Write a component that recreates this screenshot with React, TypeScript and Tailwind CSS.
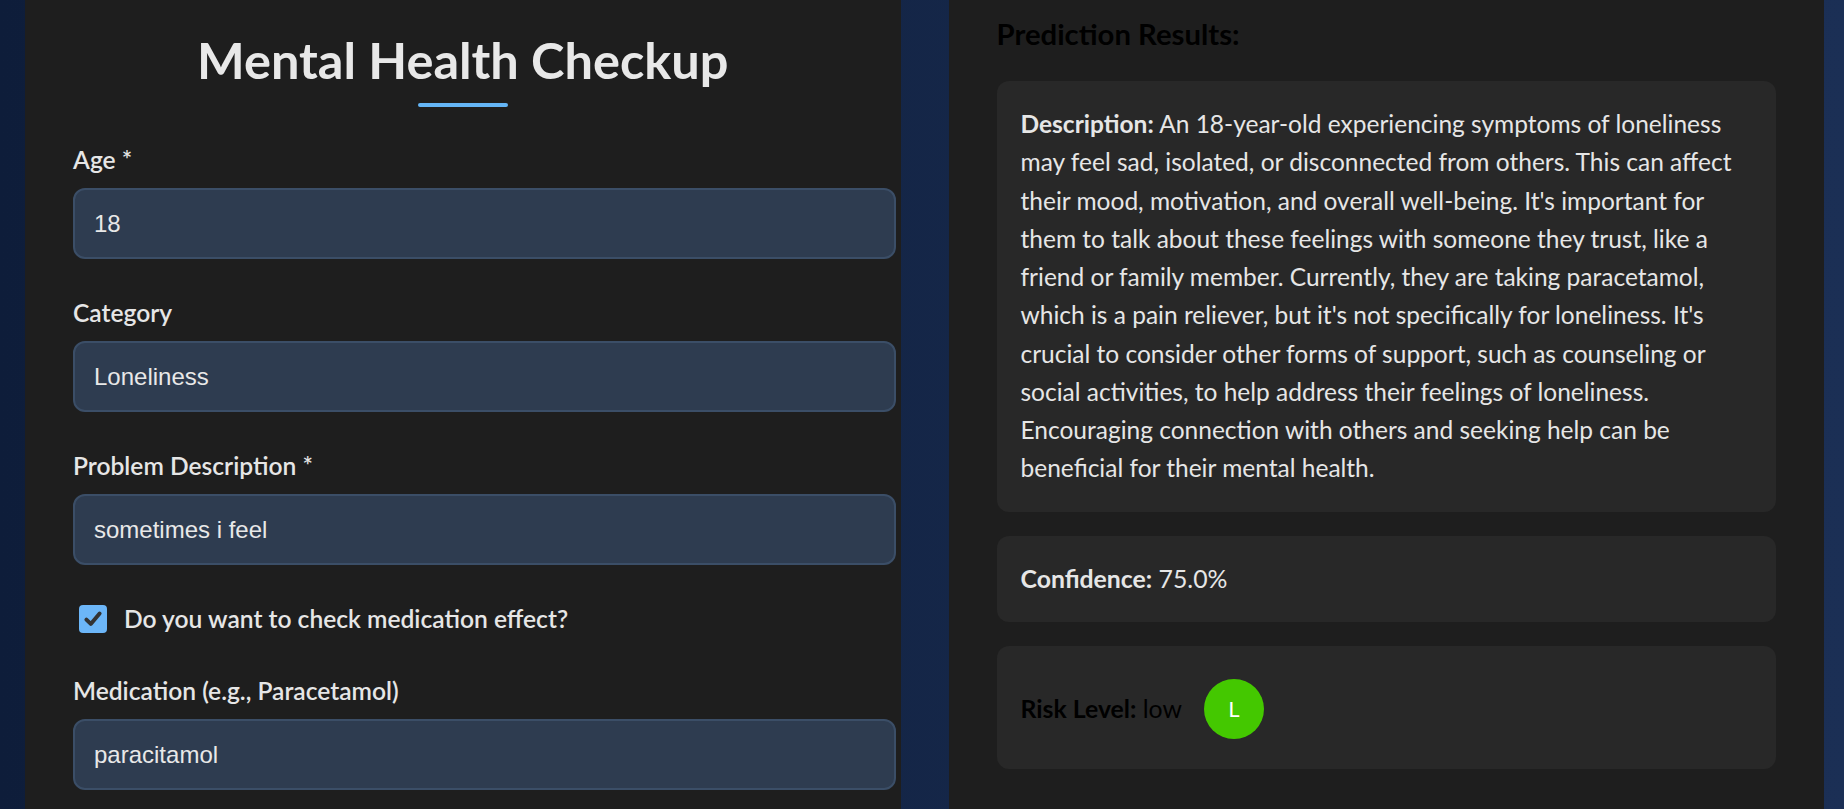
import React from 'react'

type FieldProps = { label: string; value: string }

function Field({ label, value }: FieldProps) {
  return (
    <div className="mb-[39px]">
      <label className="block text-[24.6px] leading-[30px] font-semibold text-[#e6e6e6] mb-[13px]">{label}</label>
      <input
        readOnly
        value={value}
        className="box-border block w-[823px] h-[71px] px-[19px] rounded-[12px] border-2 border-[#3b4e67] bg-[#2e3c50] text-[#e8e8e8] text-[24px] font-['Liberation_Sans',Arial,sans-serif] outline-none"
      />
    </div>
  )
}

function MentalHealthForm() {
  return (
    <div className="min-w-0 flex-1 bg-[#1e1e1e] px-12 pt-[30px]">
      <h1 className="text-center text-[50.5px] leading-[60px] font-bold text-[#e8e8e8]">Mental Health Checkup</h1>
      <div className="mx-auto mt-[13px] mb-[38px] h-[4px] w-[90px] rounded-full bg-[#64b5f6]" />

      <Field label="Age *" value="18" />
      <Field label="Category" value="Loneliness" />
      <Field label="Problem Description *" value="sometimes i feel" />

      {/* Checkbox medicación */}
      <div className="flex items-center h-[30px] mb-[42px]">
        <span className="ml-[6px] mr-[17px] flex h-[28px] w-[28px] items-center justify-center rounded-[4px] bg-[#6cb6f8]">
          <svg width="22" height="22" viewBox="0 0 20 20" fill="none" stroke="#333" strokeWidth="3.6" strokeLinecap="round" strokeLinejoin="round">
            <polyline points="4 10.5 8 14.5 16 5" />
          </svg>
        </span>
        <span className="text-[24.6px] leading-[30px] font-semibold text-[#e6e6e6]">Do you want to check medication effect?</span>
      </div>

      <Field label="Medication (e.g., Paracetamol)" value="paracitamol" />
    </div>
  )
}

function Results() {
  return (
    <div className="min-w-0 flex-1 bg-[#1e1e1e] px-12 pt-[17px]">
      <h3 className="text-[29.3px] leading-[34px] font-bold text-black mb-[30px]">Prediction Results:</h3>

      <div className="mb-6 rounded-[12px] bg-[#282828] p-6">
        <p className="text-[24.5px] leading-[38.25px] text-[#e6e6e6]">
          <strong className="font-bold">Description:</strong> An 18-year-old experiencing symptoms of loneliness may feel sad, isolated, or disconnected from others. This can affect their mood, motivation, and overall well-being. It's important for them to talk about these feelings with someone they trust, like a friend or family member. Currently, they are taking paracetamol, which is a pain reliever, but it's not specifically for loneliness. It's crucial to consider other forms of support, such as counseling or social activities, to help address their feelings of loneliness. Encouraging connection with others and seeking help can be beneficial for their mental health.
        </p>
      </div>

      <div className="mb-6 rounded-[12px] bg-[#282828] p-6">
        <p className="text-[24.8px] leading-[38.25px] text-[#e6e6e6]">
          <strong className="font-bold">Confidence:</strong> 75.0%
        </p>
      </div>

      <div className="rounded-[12px] bg-[#282828] p-6">
        <div className="flex min-h-[75px] items-center pt-[3px]">
          <p className="text-[24.8px] leading-[38.25px] text-black">
            <strong className="font-bold">Risk Level:</strong> low
          </p>
          <span className="ml-[22px] flex h-[60px] w-[60px] items-center justify-center rounded-full bg-[#44c800] text-[22px] text-white">
            L
          </span>
        </div>
      </div>
    </div>
  )
}

export default function App() {
  return (
    <div className="h-[809px] overflow-hidden bg-[linear-gradient(90deg,#0e1d3a,#1b2f55)] font-['Lato',sans-serif]">
      <div className="flex h-full gap-12 pl-[25px] pr-[20px]">
        <MentalHealthForm />
        <Results />
      </div>
    </div>
  )
}
